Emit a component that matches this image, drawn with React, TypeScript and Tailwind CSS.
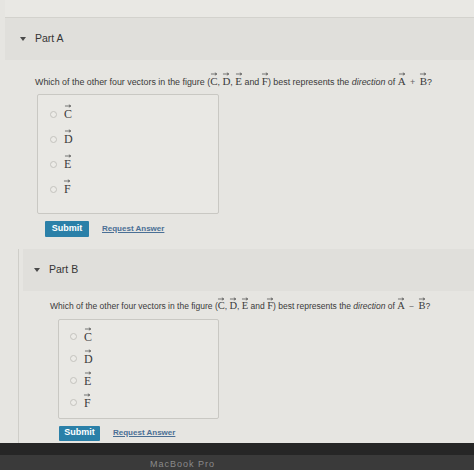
import React from 'react';

const sans = "font-['Liberation_Sans',Arial,sans-serif]";
const serif = "font-['Liberation_Serif','Times_New_Roman',serif]";

function Vec({ l, size = 'text-[12px]' }: { l: string; size?: string }) {
  return (
    <span className={`relative inline-block ${serif} ${size} leading-none text-[#3b3b3b]`}>
      <svg viewBox="0 0 8 4" className="absolute -top-[4px] left-1/2 -translate-x-1/2 w-[7px] h-[4px]">
        <path d="M0.5 2 H7 M5 0.6 L7.2 2 L5 3.4" stroke="#444" strokeWidth="0.8" fill="none" />
      </svg>
      {l}
    </span>
  );
}

function Question({ op, size, vsize }: { op: string; size: string; vsize: string }) {
  return (
    <p className={`${sans} ${size} text-[#3a3a3a] whitespace-nowrap leading-none`}>
      Which of the other four vectors in the figure (<Vec l="C" size={vsize} />, <Vec l="D" size={vsize} />,{' '}
      <Vec l="E" size={vsize} /> and <Vec l="F" size={vsize} />) best represents the{' '}
      <i>direction</i> of <Vec l="A" size={vsize} /> <span className="text-[#666] mx-[2px]">{op}</span>{' '}
      <Vec l="B" size={vsize} />?
    </p>
  );
}

function Options({ gap, className }: { gap: string; className: string }) {
  return (
    <div className={`border border-[#c9c8c3] rounded-[2px] bg-[#e9e8e4] flex flex-col ${gap} ${className}`}>
      {['C', 'D', 'E', 'F'].map(l => (
        <div key={l} className="flex items-center gap-[7px]">
          <span className="w-[7px] h-[7px] rounded-full border border-[#c4c3be] bg-[#ecebe7]" />
          <Vec l={l} />
        </div>
      ))}
    </div>
  );
}

function Actions({ className, btn }: { className: string; btn: string }) {
  return (
    <div className={`flex items-center ${className}`}>
      <button className={`${btn} bg-[#2b80a8] text-white ${sans} font-bold text-[9px] rounded-[1px] flex items-center justify-center`}>
        Submit
      </button>
      <span className={`${sans} text-[8px] font-bold text-[#4a6f95] underline ml-[13px]`}>Request Answer</span>
    </div>
  );
}

function Header({ label, className }: { label: string; className: string }) {
  return (
    <div className={`flex items-center bg-[#e0dfdb] ${className}`}>
      <svg viewBox="0 0 6 4" className="w-[6px] h-[4px]">
        <path d="M0 0 H6 L3 4 Z" fill="#4a4a4a" />
      </svg>
      <span className={`${sans} text-[10.5px] text-[#353535] ml-[9px]`}>{label}</span>
    </div>
  );
}

export default function App() {
  return (
    <div className="w-[474px] h-[470px] overflow-hidden bg-[#e6e5e1] flex flex-col">
      <div className="h-[18px] bg-[#e9e8e4] border-b border-[#d3d2cd] ml-[5px]" />

      {/* Part A */}
      <Header label="Part A" className="h-[42px] ml-[5px] pl-[15px]" />
      <div className="pl-[35px] pt-[16px]">
        <Question op="+" size="text-[8.9px]" vsize="text-[11px]" />
      </div>
      <Options gap="gap-[13px]" className="ml-[37px] mt-[7px] w-[182px] h-[120px] pl-[12px] pt-[13px]" />
      <Actions className="ml-[45px] mt-[7px]" btn="w-[44px] h-[16px]" />

      {/* Part B */}
      <div className="flex-1 ml-[18px] mt-[12px] border-l border-[#cfcec9] flex flex-col">
        <Header label="Part B" className="h-[42px] ml-[4px] pl-[11px]" />
        <div className="pl-[31px] pt-[10px]">
          <Question op="−" size="text-[8.5px]" vsize="text-[10.5px]" />
        </div>
        <Options gap="gap-[10px]" className="ml-[39px] mt-[7px] w-[161px] h-[100px] pl-[11px] pt-[11px]" />
        <Actions className="ml-[40px] mt-[7px]" btn="w-[41px] h-[15px]" />
      </div>

      {/* laptop bezel */}
      <div className="h-[27px] shrink-0 bg-[#2c2c2c] flex flex-col">
        <div className="h-[12px] bg-[#262626]" />
        <div className="flex-1 bg-[#3a3a3a] flex items-end">
          <span className={`${sans} text-[9px] leading-none tracking-[1px] text-[#8a8a8a] ml-[150px] mb-[1px]`}>MacBook Pro</span>
        </div>
      </div>
    </div>
  );
}
